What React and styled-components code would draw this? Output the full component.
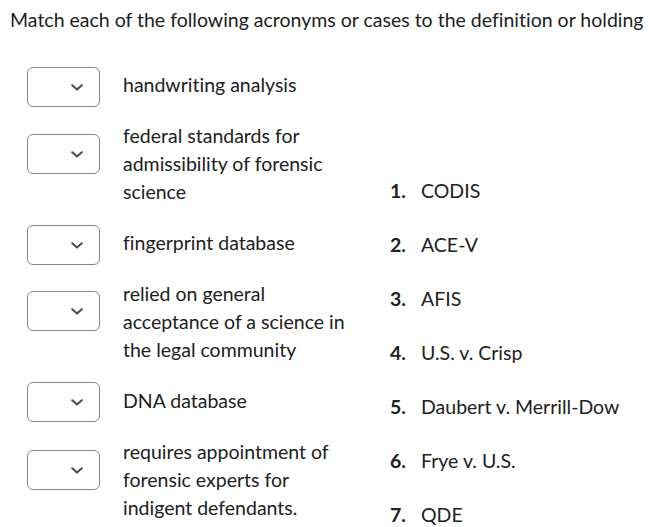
import React from "react";
import styled, { createGlobalStyle } from "styled-components";

const Global = createGlobalStyle`
  html, body { margin: 0; padding: 0; background: #ffffff; }
  body {
    font-family: Lato, "Noto Sans", sans-serif;
    color: #202122;
    font-variant-ligatures: none;
    -webkit-font-smoothing: antialiased;
  }
`;

const Page = styled.div`
  padding: 6px 0 0 10px;
  width: 653px;
  box-sizing: border-box;
`;

const Title = styled.p`
  margin: 0;
  font-size: 19.5px;
  line-height: 28px;
  white-space: nowrap;
`;

const Body = styled.div`
  display: flex;
  align-items: flex-start;
  margin-top: 27px;
`;

const LeftCol = styled.div`
  flex: 0 0 auto;
  display: flex;
  flex-direction: column;
  gap: 23px;
  width: 380px;
  box-sizing: border-box;
  padding-left: 17px;
  padding-top: 10px;
`;

const Row = styled.div`
  display: flex;
  align-items: flex-start;
  gap: 23px;
`;

const SelectBox = styled.div`
  flex: 0 0 auto;
  width: 73px;
  height: 40px;
  box-sizing: border-box;
  border: 1px solid #868686;
  border-radius: 6px;
  background: #fff;
  display: flex;
  align-items: center;
  justify-content: flex-end;
  padding-right: 16px;
  margin-top: ${(p) => p.$offset}px;
  margin-bottom: -14px;
`;

const Label = styled.div`
  font-size: 19.5px;
  line-height: 28px;
  width: 224px;
`;

const List = styled.ol`
  margin: 0;
  padding: 0;
  list-style: none;
  display: flex;
  flex-direction: column;
  gap: 26px;
  padding-top: 116px;
`;

const Item = styled.li`
  display: flex;
  font-size: 19.5px;
  line-height: 28px;
  white-space: nowrap;
`;

const Num = styled.span`
  font-weight: 700;
  width: 31px;
  flex: 0 0 auto;
`;

const Chevron = () => (
  <svg width="12" height="7" viewBox="0 0 12 7" fill="none">
    <path d="M1.2 1.2 L6 5.6 L10.8 1.2" stroke="#494c4e" strokeWidth="2" strokeLinecap="round" strokeLinejoin="round" />
  </svg>
);

const rows = [
  { text: "handwriting analysis", offset: -4 },
  { text: "federal standards for admissibility of forensic science", offset: 12 },
  { text: "fingerprint database", offset: -4 },
  { text: "relied on general acceptance of a science in the legal community", offset: 11 },
  { text: "DNA database", offset: -5 },
  { text: "requires appointment of forensic experts for indigent defendants.", offset: 12 },
];

const choices = [
  "CODIS",
  "ACE-V",
  "AFIS",
  "U.S. v. Crisp",
  "Daubert v. Merrill-Dow",
  "Frye v. U.S.",
  "QDE",
];

export default function App() {
  return (
    <>
      <Global />
      <Page>
        <Title>Match each of the following acronyms or cases to the definition or holding</Title>
        <Body>
          <LeftCol>
            {rows.map((r, i) => (
              <Row key={i}>
                <SelectBox $offset={r.offset}>
                  <Chevron />
                </SelectBox>
                <Label>{r.text}</Label>
              </Row>
            ))}
          </LeftCol>
          <List>
            {choices.map((c, i) => (
              <Item key={i}>
                <Num>{i + 1}.</Num>
                <span>{c}</span>
              </Item>
            ))}
          </List>
        </Body>
      </Page>
    </>
  );
}
